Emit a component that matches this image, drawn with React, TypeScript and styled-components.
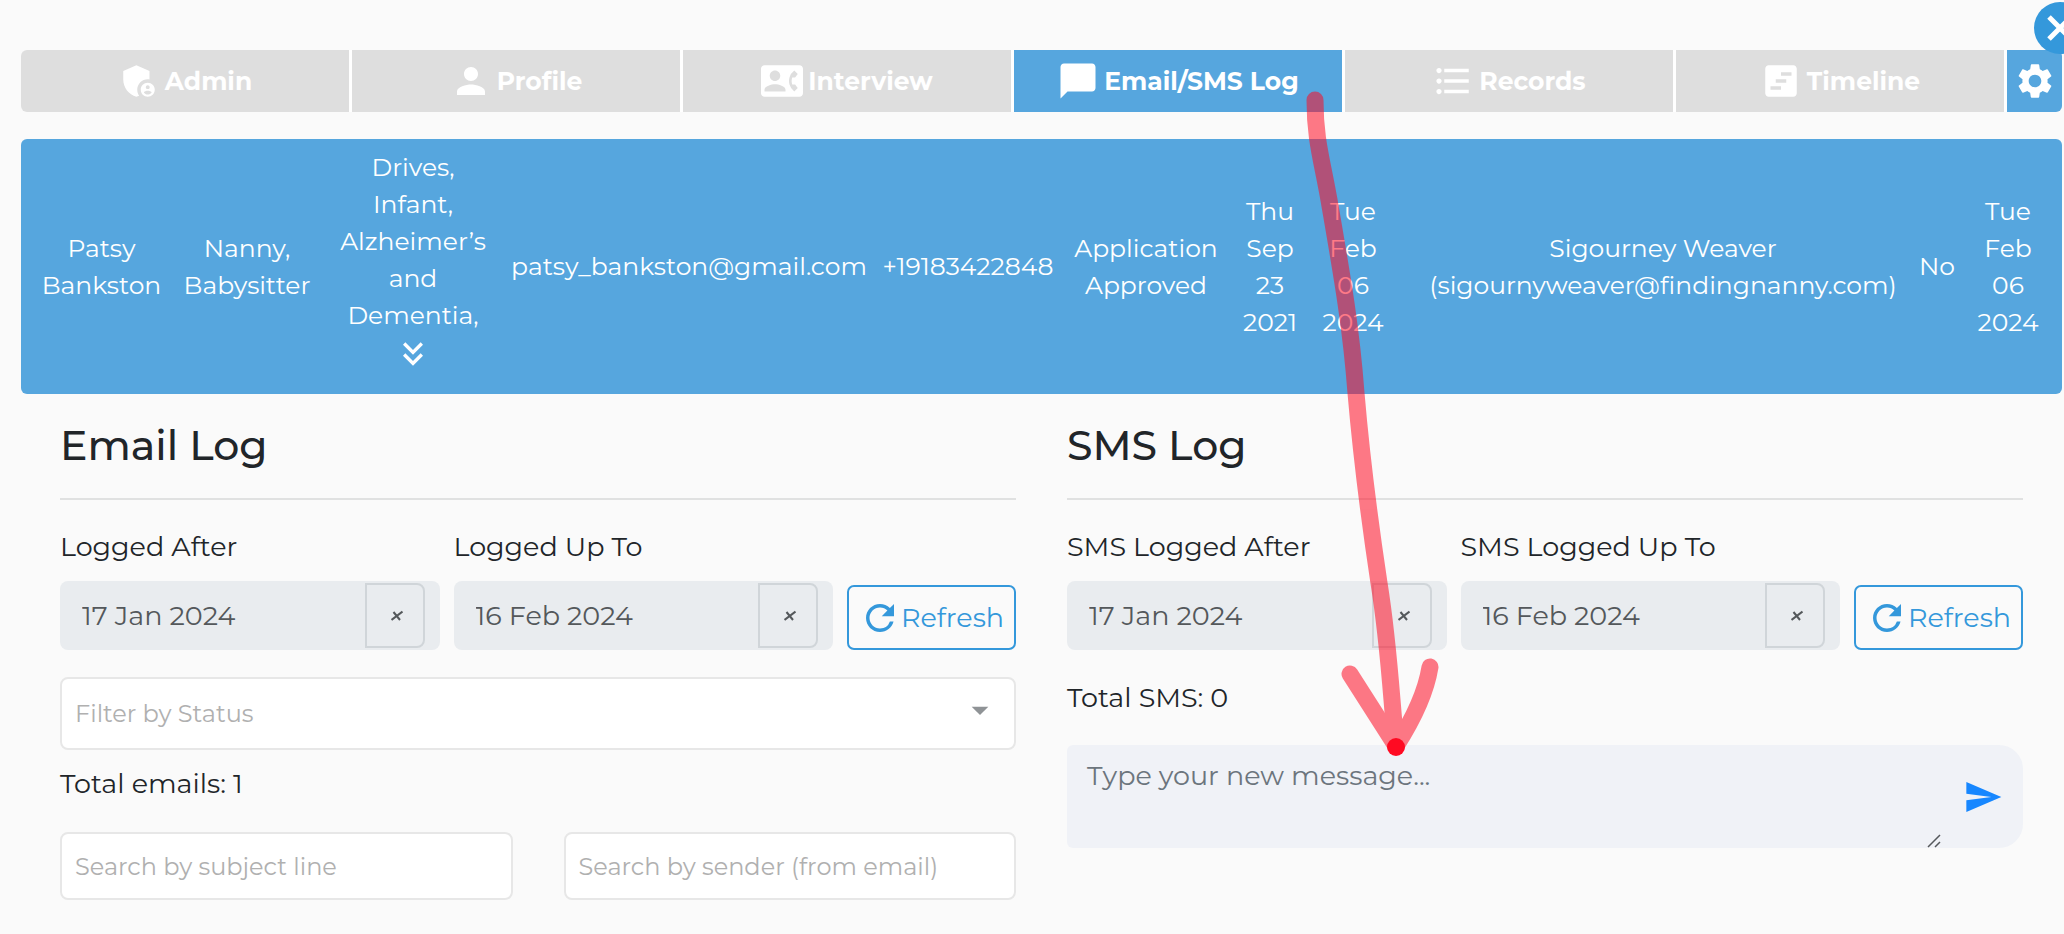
import React from 'react';
import styled, { createGlobalStyle, css } from 'styled-components';
import {
  MdAdminPanelSettings,
  MdArrowDropDown,
  MdChatBubble,
  MdContactPhone,
  MdFormatListBulleted,
  MdKeyboardDoubleArrowDown,
  MdPerson,
  MdRefresh,
  MdSend,
  MdSettings,
  MdViewTimeline,
} from 'react-icons/md';

const GlobalStyle = createGlobalStyle`
  *, *::before, *::after { box-sizing: border-box; }
  body {
    margin: 0;
    background: #fafafa;
    color: #212529;
    font-family: Montserrat, Inter, sans-serif;
    font-size: 27px;
    line-height: 42px;
    overflow-x: hidden;
  }
  button, input, select, textarea { font: inherit; margin: 0; }
`;

const Page = styled.div`
  position: relative;
  padding: 50px 2px 32px 21px;
  overflow: hidden;
`;

const CloseButton = styled.button`
  position: absolute;
  z-index: 2;
  top: 2px;
  right: -22px;
  width: 52px;
  height: 52px;
  display: flex;
  align-items: center;
  justify-content: center;
  padding: 0;
  border: 0;
  border-radius: 50%;
  background: #3498db;
  color: #fff;
`;

const Tabs = styled.nav`
  display: flex;
  gap: 3px;
  border-radius: 6px;
  overflow: hidden;
  background: #fff;
`;

const Tab = styled.button<{ $active?: boolean; $compact?: boolean }>`
  flex: ${p => (p.$compact ? '0 0 55px' : '1 1 0')};
  height: 62px;
  display: flex;
  align-items: center;
  justify-content: center;
  gap: 5px;
  padding: 0;
  border: 0;
  background: ${p => (p.$active ? '#56a6de' : '#dedede')};
  color: #fff;
  font-size: 25px;
  font-weight: 700;
  svg { font-size: 42px; flex: none; }
`;

const Banner = styled.section`
  margin-top: 27px;
  padding: 9px 0 9px 20px;
  border-radius: 6px;
  background: #56a6de;
`;

const Summary = styled.table`
  width: 100%;
  table-layout: fixed;
  border-collapse: collapse;
  color: #fff;
  font-size: 25px;
  line-height: 37px;
  text-align: center;
  td { padding: 0; height: 237px; }
`;

const Line = styled.div`
  white-space: nowrap;
  display: flex;
  justify-content: center;
`;

const ExpandButton = styled.button`
  display: block;
  margin: 0 auto 10px;
  padding: 0;
  border: 0;
  background: none;
  color: #fff;
  font-size: 40px;
  svg { display: block; }
`;

const Columns = styled.main`
  display: grid;
  grid-template-columns: 1fr 1fr;
  gap: 51px;
  padding: 26px 39px 0;
`;

const Log = styled.section`
  min-width: 0;
`;

const Title = styled.h2`
  margin: 0;
  padding-bottom: 28px;
  border-bottom: 2px solid #e0e1e1;
  font-size: 41px;
  line-height: 50px;
  font-weight: 500;
`;

const FilterRow = styled.form`
  display: flex;
  align-items: flex-end;
  gap: 14px;
  margin: 26px 0 27px;
`;

const Field = styled.div`
  flex: 1;
  min-width: 0;
`;

const FieldLabel = styled.label`
  display: block;
  margin-bottom: 13px;
`;

const DateBox = styled.div`
  display: flex;
  height: 69px;
  padding: 2px 15px 2px 0;
  border-radius: 8px;
  background: #e9ecef;
`;

const DateInput = styled.input`
  flex: 1;
  min-width: 0;
  padding: 0 0 0 22px;
  border: 0;
  background: transparent;
  color: #54585b;
  outline: 0;
`;

const ClearButton = styled.button`
  width: 60px;
  padding: 0 0 0 4px;
  border: 2px solid #d0d5d9;
  border-radius: 0 8px 8px 0;
  background: transparent;
  color: #54585b;
  svg { display: block; margin: 0 auto; }
`;

const RefreshButton = styled.button`
  flex: 0 0 169px;
  height: 65px;
  display: flex;
  align-items: center;
  justify-content: center;
  padding: 0;
  border: 2px solid #3498db;
  border-radius: 7px;
  background: transparent;
  color: #3498db;
  svg { font-size: 42px; }
`;

const boxed = css`
  width: 100%;
  padding: 0 13px;
  border: 2px solid #e7e7e7;
  border-radius: 8px;
  background: #fff;
  font-size: 24px;
  outline: 0;
`;

const SelectWrap = styled.div`
  position: relative;
  svg {
    position: absolute;
    right: 16px;
    top: 13px;
    font-size: 40px;
    color: #8f9396;
    pointer-events: none;
  }
`;

const StatusSelect = styled.select`
  ${boxed}
  display: block;
  height: 73px;
  appearance: none;
  color: #b0b0b0;
`;

const Total = styled.p<{ $spaced?: boolean }>`
  margin: ${p => (p.$spaced ? '13px 0 27px' : '0 0 26px')};
`;

const SearchRow = styled.div`
  display: grid;
  grid-template-columns: 1fr 1fr;
  gap: 51px;
`;

const SearchInput = styled.input`
  ${boxed}
  height: 68px;
  &::placeholder { color: #b0b0b0; opacity: 1; }
`;

const Composer = styled.form`
  display: flex;
  height: 103px;
  border-radius: 6px 24px 24px 6px;
  background: #f0f2f7;
`;

const MessageWrap = styled.div`
  position: relative;
  flex: 1;
  svg { position: absolute; right: 0; bottom: 0; }
`;

const MessageInput = styled.textarea`
  display: block;
  width: 100%;
  height: 100%;
  padding: 10px 20px;
  border: 0;
  background: transparent;
  resize: none;
  outline: 0;
  &::placeholder { color: #6c757d; opacity: 1; }
`;

const SendButton = styled.button`
  flex: 0 0 81px;
  display: flex;
  align-items: center;
  justify-content: center;
  padding: 0;
  border: 0;
  background: transparent;
  color: #1787ff;
  font-size: 40px;
`;

const Annotation = styled.svg`
  position: absolute;
  z-index: 1;
  top: 80px;
  left: 1300px;
  pointer-events: none;
`;

const tabs = [
  { label: 'Admin', Icon: MdAdminPanelSettings },
  { label: 'Profile', Icon: MdPerson },
  { label: 'Interview', Icon: MdContactPhone },
  { label: 'Email/SMS Log', Icon: MdChatBubble, active: true },
  { label: 'Records', Icon: MdFormatListBulleted },
  { label: 'Timeline', Icon: MdViewTimeline },
];

const summary = [
  { width: 121, lines: ['Patsy', 'Bankston'] },
  { width: 170, lines: ['Nanny,', 'Babysitter'] },
  { width: 162, lines: ['Drives,', 'Infant,', 'Alzheimer’s', 'and', 'Dementia,'], expandable: true },
  { width: 390, lines: ['patsy_bankston@gmail.com'] },
  { width: 168, lines: ['+19183422848'] },
  { width: 188, lines: ['Application', 'Approved'] },
  { width: 60, lines: ['Thu', 'Sep', '23', '2021'] },
  { width: 106, lines: ['Tue', 'Feb', '06', '2024'] },
  { width: 514, lines: ['Sigourney Weaver', '(sigournyweaver@findingnanny.com)'] },
  { width: 34, lines: ['No'] },
  { width: 108, lines: ['Tue', 'Feb', '06', '2024'] },
];

function DateField({ id, label, value }: { id: string; label: string; value: string }) {
  return (
    <Field>
      <FieldLabel htmlFor={id}>{label}</FieldLabel>
      <DateBox>
        <DateInput id={id} value={value} readOnly />
        <ClearButton type="button" aria-label={`Clear ${label}`}>
          <svg width="12" height="12" viewBox="0 0 12 12" fill="none" stroke="currentColor" strokeWidth="2">
            <path d="M2.500 2 9 10M11.500 1.500 0.500 10" />
          </svg>
        </ClearButton>
      </DateBox>
    </Field>
  );
}

function DateFilters({ prefix, name }: { prefix: string; name: string }) {
  return (
    <FilterRow onSubmit={e => e.preventDefault()}>
      <DateField id={`${name}-after`} label={`${prefix}Logged After`} value="17 Jan 2024" />
      <DateField id={`${name}-upto`} label={`${prefix}Logged Up To`} value="16 Feb 2024" />
      <RefreshButton type="submit">
        <MdRefresh />
        Refresh
      </RefreshButton>
    </FilterRow>
  );
}

export default function App() {
  return (
    <Page>
      <GlobalStyle />
      <CloseButton aria-label="Close">
        <svg width="28" height="28" viewBox="0 0 28 28" fill="none" stroke="currentColor" strokeWidth="5">
          <path d="M3 3 25 25M25 3 3 25" />
        </svg>
      </CloseButton>

      <Tabs>
        {tabs.map(({ label, Icon, active }) => (
          <Tab key={label} $active={active}>
            <Icon />
            {label}
          </Tab>
        ))}
        <Tab $active $compact aria-label="Settings">
          <MdSettings />
        </Tab>
      </Tabs>

      <Banner>
        <Summary>
          <colgroup>
            {summary.map((cell, i) => (
              <col key={i} width={cell.width} />
            ))}
          </colgroup>
          <tbody>
            <tr>
              {summary.map((cell, i) => (
                <td key={i}>
                  {cell.lines.map(line => (
                    <Line key={line}>{line}</Line>
                  ))}
                  {cell.expandable && (
                    <ExpandButton aria-label="Show more">
                      <MdKeyboardDoubleArrowDown />
                    </ExpandButton>
                  )}
                </td>
              ))}
            </tr>
          </tbody>
        </Summary>
      </Banner>

      <Columns>
        <Log>
          <Title>Email Log</Title>
          <DateFilters prefix="" name="email" />
          <SelectWrap>
            <StatusSelect aria-label="Filter by Status" defaultValue="">
              <option value="">Filter by Status</option>
            </StatusSelect>
            <MdArrowDropDown />
          </SelectWrap>
          <Total $spaced>Total emails: 1</Total>
          <SearchRow>
            <SearchInput aria-label="Search by subject line" placeholder="Search by subject line" />
            <SearchInput aria-label="Search by sender" placeholder="Search by sender (from email)" />
          </SearchRow>
        </Log>

        <Log>
          <Title>SMS Log</Title>
          <DateFilters prefix="SMS " name="sms" />
          <Total>Total SMS: 0</Total>
          <Composer onSubmit={e => e.preventDefault()}>
            <MessageWrap>
              <MessageInput aria-label="New message" placeholder="Type your new message..." />
              <svg width="15" height="14" viewBox="0 0 15 14" stroke="#55585c" strokeWidth="1.5">
                <path d="M1 13 13 1M8 13l5-5" />
              </svg>
            </MessageWrap>
            <SendButton aria-label="Send">
              <MdSend />
            </SendButton>
          </Composer>
        </Log>
      </Columns>

      <Annotation width="150" height="680" viewBox="1300 80 150 680" fill="none" aria-hidden="true">
        <g opacity="0.54" stroke="#ff0a22" strokeWidth="17" strokeLinecap="round" strokeLinejoin="round">
          <path d="M1315 100C1315 140 1322 160 1329 200C1341 270 1351 325 1356 393C1363 475 1371 530 1379 583C1389 645 1391 695 1396 746" />
          <path d="M1350 674 1396 746C1414 718 1426 692 1430 667" />
        </g>
        <circle cx="1396" cy="747" r="9" fill="#ff0a22" />
      </Annotation>
    </Page>
  );
}
